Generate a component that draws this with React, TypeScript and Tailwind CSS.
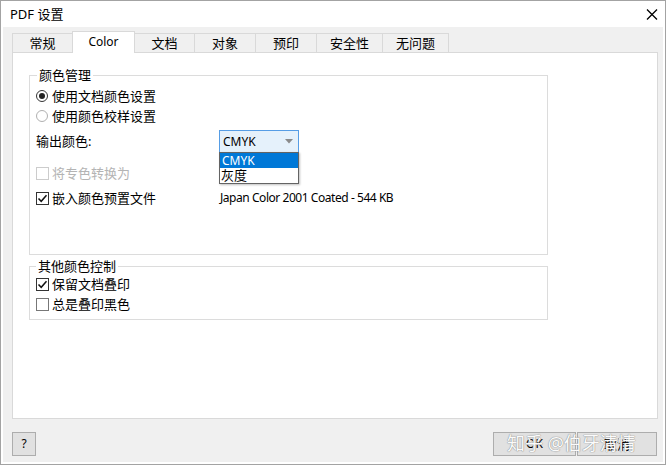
import React from "react";

function Radio({ checked }: { checked?: boolean }) {
  return (
    <span
      className={`flex items-center justify-center w-[12px] h-[12px] rounded-full border bg-white ${
        checked ? "border-[#333333]" : "border-[#b0b0b0]"
      }`}
    >
      {checked && <span className="w-[6px] h-[6px] rounded-full bg-[#222222]" />}
    </span>
  );
}

function Check({ checked, disabled }: { checked?: boolean; disabled?: boolean }) {
  return (
    <span
      className={`flex items-center justify-center w-[13px] h-[13px] border bg-white ${
        disabled ? "border-[#cccccc]" : checked ? "border-[#333333]" : "border-[#777777]"
      }`}
    >
      {checked && (
        <svg width="11" height="11" viewBox="0 0 11 11">
          <path d="M1.5 5.5 L4.2 8.3 L9.5 2.2" fill="none" stroke="#111" strokeWidth="1.5" />
        </svg>
      )}
    </span>
  );
}

function Tab({ label, w, active }: { label: string; w: string; active?: boolean }) {
  if (active) {
    return (
      <div
        className={`${w} h-[22px] -mb-px z-10 -ml-px bg-white border-l border-t border-r border-[#d9d9d9] flex items-center justify-center text-[12px] leading-none pb-[1px]`}
      >
        {label}
      </div>
    );
  }
  return (
    <div
      className={`${w} h-[19px] -ml-px first:ml-0 bg-[#f0f0f0] border-l border-t border-r border-[#d9d9d9] flex items-center justify-center text-[13px] leading-none`}
    >
      {label}
    </div>
  );
}

export default function App() {
  return (
    <div className="relative w-[669px] h-[468px] bg-white overflow-hidden text-black font-['Noto_Sans','Noto_Sans_CJK_SC',sans-serif]">
      <div className="flex flex-col w-[666px] h-[465px] border border-[#a3a3a3]">
        {/* title bar */}
        <div className="flex items-center justify-between h-[26px] pl-[9px] pr-[7px] bg-white">
          <span className="text-[13px] leading-none">PDF 设置</span>
          <svg width="12" height="11" viewBox="0 0 12 11">
            <path d="M1 0.5 L11 10.5 M11 0.5 L1 10.5" stroke="#000" strokeWidth="1.3" />
          </svg>
        </div>

        {/* body */}
        <div className="flex-1 mx-[2px] mb-[2px] bg-[#f0f0f0] flex flex-col pt-[4px] pl-[9px] pr-[5px]">
          {/* tabs */}
          <div className="flex items-end h-[21px]">
            <Tab label="常规" w="w-[61px]" />
            <Tab label="Color" w="w-[63px]" active />
            <Tab label="文档" w="w-[61px]" />
            <Tab label="对象" w="w-[62px]" />
            <Tab label="预印" w="w-[62px]" />
            <Tab label="安全性" w="w-[67px]" />
            <Tab label="无问题" w="w-[67px]" />
          </div>

          {/* panel */}
          <div className="h-[367px] border border-[#d9d9d9] bg-white pt-[22px] pl-[16px]">
            {/* group 1 */}
            <div className="relative w-[519px] h-[180px] border border-[#dcdcdc]">
              <span className="absolute left-[7px] top-[-9px] px-[2px] bg-white text-[13px] leading-[16px]">
                颜色管理
              </span>
              <div className="flex flex-col pt-[10px] pl-[6px] text-[13px]">
                <div className="flex items-center h-[20px]">
                  <Radio checked />
                  <span className="ml-[4px] leading-none">使用文档颜色设置</span>
                </div>
                <div className="flex items-center h-[20px]">
                  <Radio />
                  <span className="ml-[4px] leading-none">使用颜色校样设置</span>
                </div>
                <div className="flex items-center h-[23px] mt-[4px]">
                  <span className="w-[183px] leading-none">输出颜色:</span>
                  <div className="relative w-[80px] h-[23px]">
                    <div className="flex items-center justify-between w-full h-full border border-[#569de5] bg-[#e5f1fb] pl-[3px] pr-[5px]">
                      <span className="text-[12px] leading-none">CMYK</span>
                      <svg width="8" height="5" viewBox="0 0 8 5">
                        <path d="M0 0 L8 0 L4 4.5 Z" fill="#8a8a8a" />
                      </svg>
                    </div>
                    <div className="absolute left-0 top-[22px] w-[80px] border border-[#646464] bg-white shadow-[1px_1px_2px_rgba(0,0,0,0.25)] z-20">
                      <div className="h-[15px] bg-[#0078d7] text-white text-[12px] leading-[15px] pl-[2px]">CMYK</div>
                      <div className="h-[15px] text-[13px] leading-[15px] pl-[1px]">灰度</div>
                    </div>
                  </div>
                </div>
                <div className="flex items-center h-[20px] mt-[10px]">
                  <Check disabled />
                  <span className="ml-[3px] leading-none text-[#b4b4b4]">将专色转换为</span>
                </div>
                <div className="flex items-center h-[20px] mt-[5px]">
                  <Check checked />
                  <span className="ml-[3px] leading-none w-[168px]">嵌入颜色预置文件</span>
                  <span className="text-[12px] leading-none tracking-[-0.45px]">Japan Color 2001 Coated - 544 KB</span>
                </div>
              </div>
            </div>

            {/* group 2 */}
            <div className="relative w-[519px] h-[54px] mt-[11px] border border-[#dcdcdc]">
              <span className="absolute left-[6px] top-[-9px] px-[2px] bg-white text-[13px] leading-[16px]">
                其他颜色控制
              </span>
              <div className="flex flex-col pt-[7px] pl-[6px] text-[13px]">
                <div className="flex items-center h-[20px]">
                  <Check checked />
                  <span className="ml-[3px] leading-none">保留文档叠印</span>
                </div>
                <div className="flex items-center h-[20px]">
                  <Check />
                  <span className="ml-[3px] leading-none">总是叠印黑色</span>
                </div>
              </div>
            </div>
          </div>

          {/* buttons */}
          <div className="flex items-center justify-between h-[24px] mt-[13px] mr-[1px]">
            <button className="w-[24px] h-[24px] bg-[#e1e1e1] border border-[#adadad] text-[12px] leading-none flex items-center justify-center">
              ?
            </button>
            <div className="flex gap-[1px]">
              <button className="w-[83px] h-[24px] bg-[#e1e1e1] border border-[#adadad] text-[12px] leading-none flex items-center justify-center">
                OK
              </button>
              <button className="w-[80px] h-[24px] bg-[#e1e1e1] border border-[#adadad] text-[13px] leading-none flex items-center justify-center">
                取消
              </button>
            </div>
          </div>
        </div>
      </div>

      {/* watermark */}
      <div className="absolute left-[507px] top-[433px] text-[18px] leading-[20px] text-[#fbfbfb] [text-shadow:0_0_1px_#8a8a8a,0_0_1px_#8a8a8a] whitespace-nowrap pointer-events-none">
        知乎 @伯牙清情
      </div>
    </div>
  );
}
